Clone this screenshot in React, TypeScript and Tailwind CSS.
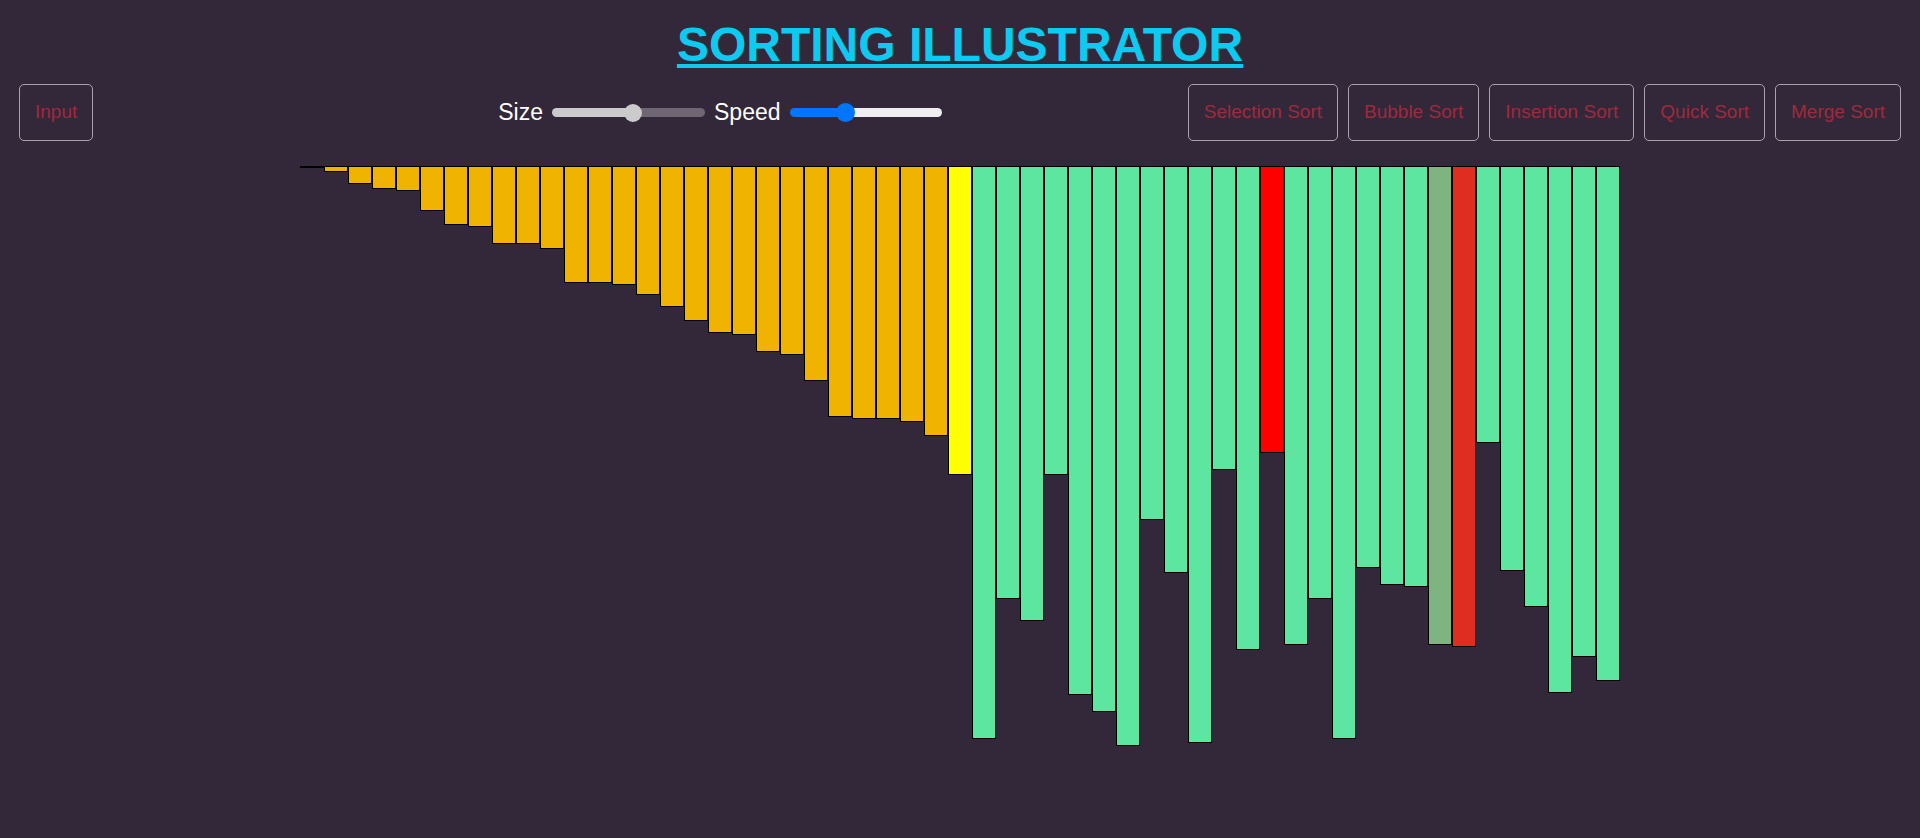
import { useState } from 'react'

// bar heights (px) and state colours as captured mid-sort
const HEIGHTS = [
  0, 6, 18, 23, 25, 45, 59, 61, 78, 78, 83, 117, 117, 119, 129, 141, 155, 167, 169, 186, 189, 215, 251, 253, 253,
  256, 270, 309, 573, 433, 455, 309, 529, 546, 580, 354, 407, 577, 304, 484, 287, 479, 433, 573, 402, 419, 421, 479,
  481, 277, 405, 441, 527, 491, 515,
]

const SORTED = 27

function barColor(i: number) {
  if (i < SORTED) return 'bg-[#f0b400]'
  if (i === SORTED) return 'bg-[#ffff00]'
  if (i === 40) return 'bg-[#ff0000]'
  if (i === 47) return 'bg-[#7db47f]'
  if (i === 48) return 'bg-[#e02d22]'
  return 'bg-[#5de6a0]'
}

const SORTS = ['Selection Sort', 'Bubble Sort', 'Insertion Sort', 'Quick Sort', 'Merge Sort']

function Btn({ label }: { label: string }) {
  return (
    <button className="h-[57px] px-[15px] flex items-center rounded-[5px] border border-[#a9a3ad] text-[19px] text-[#a0293d] whitespace-nowrap">
      {label}
    </button>
  )
}

function pct(v: number, min: number, max: number) {
  return ((v - min) / (max - min)) * 100
}

export default function App() {
  const [size, setSize] = useState(58)
  const [speed, setSpeed] = useState(35)

  const sizeP = pct(size, 10, 100)
  const speedP = pct(speed, 0, 100)

  return (
    <div className="min-h-screen bg-[#322839] font-['Liberation_Sans',Arial,sans-serif]">
      <h1 className="pt-[17px] text-center text-[48px] leading-[55px] font-bold text-[#0dcaf0] underline">
        SORTING ILLUSTRATOR
      </h1>

      <div className="mt-[12px] flex items-center px-[19px]">
        <Btn label="Input" />

        <div className="ml-[405px] flex items-center gap-[9px] text-[23px] text-white">
          <span>Size</span>
          <input
            type="range"
            min={10}
            max={100}
            value={size}
            disabled
            onChange={(e) => setSize(Number(e.target.value))}
            className="w-[153px] h-[9px] appearance-none rounded-full outline-none [&::-webkit-slider-thumb]:appearance-none [&::-webkit-slider-thumb]:w-[18px] [&::-webkit-slider-thumb]:h-[18px] [&::-webkit-slider-thumb]:rounded-full [&::-webkit-slider-thumb]:bg-[#cbcbcb]"
            style={{ background: `linear-gradient(to right, #cbcbcb ${sizeP}%, #6e6672 ${sizeP}%)` }}
          />
          <span>Speed</span>
          <input
            type="range"
            min={0}
            max={100}
            value={speed}
            onChange={(e) => setSpeed(Number(e.target.value))}
            className="w-[152px] h-[9px] appearance-none rounded-full outline-none [&::-webkit-slider-thumb]:appearance-none [&::-webkit-slider-thumb]:w-[19px] [&::-webkit-slider-thumb]:h-[19px] [&::-webkit-slider-thumb]:rounded-full [&::-webkit-slider-thumb]:bg-[#0075ff]"
            style={{ background: `linear-gradient(to right, #0075ff ${speedP}%, #efefef ${speedP}%)` }}
          />
        </div>

        <div className="ml-auto flex items-center gap-[10px]">
          {SORTS.map((s) => (
            <Btn key={s} label={s} />
          ))}
        </div>
      </div>

      <div className="mt-[25px] flex justify-center items-start">
        {HEIGHTS.map((h, i) => (
          <div key={i} className={`w-[24px] border border-black ${barColor(i)}`} style={{ height: h }} />
        ))}
      </div>
    </div>
  )
}
